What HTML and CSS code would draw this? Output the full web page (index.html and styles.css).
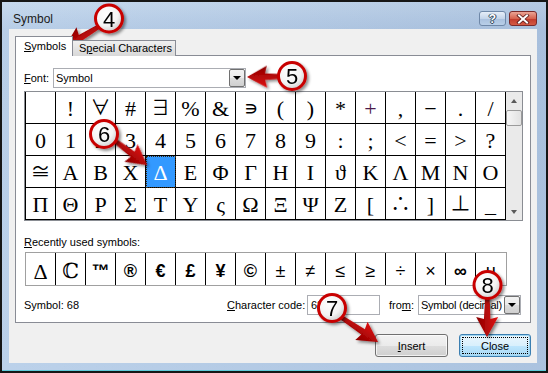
FILE: index.html
```html
<!DOCTYPE html>
<html>
<head>
<meta charset="utf-8">
<link rel="stylesheet" href="styles.css">
</head>
<body>
<div class="window">
  <div class="titlebar">
    <span class="title">Symbol</span>
    <div class="caption">
      <span class="cbtn help">?</span>
      <span class="cbtn close"><svg width="14" height="10" viewBox="0 0 14 10"><path d="M3 1.5 L11 8.5 M11 1.5 L3 8.5" stroke="#5a1a1a" stroke-width="3.6" stroke-linecap="square"/><path d="M3 1.5 L11 8.5 M11 1.5 L3 8.5" stroke="#fff" stroke-width="2" stroke-linecap="square"/></svg></span>
    </div>
  </div>
  <div class="client">
    <div class="tabs">
      <div class="tab active"><u>S</u>ymbols</div>
      <div class="tab">S<u>p</u>ecial Characters</div>
    </div>
    <div class="panel">
      <div class="font-row">
        <span class="font-label"><u>F</u>ont:</span>
        <div class="combo"><span class="combo-text">Symbol</span><span class="dd"><i class="tri"></i></span></div>
      </div>
      <div class="grid-wrap">
        <div class="grid">
          <span class="c"> </span><span class="c">!</span><span class="c m">∀</span><span class="c">#</span><span class="c m">∃</span><span class="c">%</span><span class="c">&amp;</span><span class="c m">∍</span><span class="c">(</span><span class="c">)</span><span class="c">*</span><span class="c plus">+</span><span class="c">,</span><span class="c">−</span><span class="c">.</span><span class="c">/</span>
          <span class="c">0</span><span class="c">1</span><span class="c">2</span><span class="c">3</span><span class="c">4</span><span class="c">5</span><span class="c">6</span><span class="c">7</span><span class="c">8</span><span class="c">9</span><span class="c">:</span><span class="c">;</span><span class="c">&lt;</span><span class="c">=</span><span class="c">&gt;</span><span class="c">?</span>
          <span class="c m">≅</span><span class="c">Α</span><span class="c">Β</span><span class="c">Χ</span><span class="c sel">Δ</span><span class="c">Ε</span><span class="c">Φ</span><span class="c">Γ</span><span class="c">Η</span><span class="c">Ι</span><span class="c">ϑ</span><span class="c">Κ</span><span class="c">Λ</span><span class="c">Μ</span><span class="c">Ν</span><span class="c">Ο</span>
          <span class="c">Π</span><span class="c">Θ</span><span class="c">Ρ</span><span class="c">Σ</span><span class="c">Τ</span><span class="c">Υ</span><span class="c">ς</span><span class="c">Ω</span><span class="c">Ξ</span><span class="c">Ψ</span><span class="c">Ζ</span><span class="c">[</span><span class="c m">∴</span><span class="c">]</span><span class="c m">⊥</span><span class="c">_</span>
        </div>
        <div class="scrollbar">
          <span class="sb-btn"><i class="tri-up"></i></span>
          <span class="thumb"></span>
          <span class="track"></span>
          <span class="sb-btn"><i class="tri-down"></i></span>
        </div>
      </div>
      <div class="recent-label"><u>R</u>ecently used symbols:</div>
      <div class="recent">
        <span class="r serif">Δ</span><span class="r dbl">ℂ</span><span class="r small">™</span><span class="r small">®</span><span class="r bold">€</span><span class="r bold">£</span><span class="r bold">¥</span><span class="r bold">©</span><span class="r">±</span><span class="r">≠</span><span class="r">≤</span><span class="r">≥</span><span class="r">÷</span><span class="r">×</span><span class="r bold">∞</span><span class="r">µ</span>
      </div>
      <div class="info-row">
        <span class="sym-info">Symbol: 68</span>
        <span class="code-label"><u>C</u>haracter code:</span>
        <span class="input">68</span>
        <span class="from-label">fro<u>m</u>:</span>
        <div class="select"><span class="combo-text">Symbol (decimal)</span><span class="dd"><i class="tri"></i></span></div>
      </div>
    </div>
    <div class="buttons">
      <span class="btn"><u>I</u>nsert</span>
      <span class="btn default"><span class="focus">Close</span></span>
    </div>
  </div>
</div>

<svg class="annotations" width="548" height="373" viewBox="0 0 548 373">
  <defs>
    <filter id="sh" x="-50%" y="-50%" width="200%" height="200%">
      <feDropShadow dx="2" dy="2" stdDeviation="1.6" flood-color="#000" flood-opacity="0.45"/>
    </filter>
    <linearGradient id="ag" x1="0" y1="0" x2="0" y2="1">
      <stop offset="0" stop-color="#e01010"/>
      <stop offset="1" stop-color="#8a0000"/>
    </linearGradient>
    <radialGradient id="cg" cx="0.4" cy="0.35" r="0.7">
      <stop offset="0" stop-color="#ffffff"/>
      <stop offset="0.6" stop-color="#f4f4f4"/>
      <stop offset="1" stop-color="#c8c8c8"/>
    </radialGradient>
  </defs>
  <g fill="url(#ag)" filter="url(#sh)">
    <polygon transform="translate(65,47) rotate(149)" points="0,0 -20,-11 -18,-3.2 -44,-2 -44,2 -18,3.2 -20,11"/>
    <polygon transform="translate(247,77) rotate(179)" points="0,0 -20,-11 -18,-3.2 -40,-2 -40,2 -18,3.2 -20,11"/>
    <polygon transform="translate(147,165) rotate(37)" points="0,0 -20,-11 -18,-3.2 -46,-2 -46,2 -18,3.2 -20,11"/>
    <polygon transform="translate(378,342) rotate(34)" points="0,0 -20,-11 -18,-3.2 -50,-2 -50,2 -18,3.2 -20,11"/>
    <polygon transform="translate(487,337) rotate(90.5)" points="0,0 -20,-11 -18,-3.2 -45,-2 -45,2 -18,3.2 -20,11"/>
  </g>
  <g filter="url(#sh)">
    <circle cx="109" cy="18.5" r="13.5" fill="url(#cg)" stroke="#c80000" stroke-width="3"/>
    <circle cx="292" cy="76" r="13.5" fill="url(#cg)" stroke="#c80000" stroke-width="3"/>
    <circle cx="104" cy="134" r="13.5" fill="url(#cg)" stroke="#c80000" stroke-width="3"/>
    <circle cx="332" cy="308" r="13.5" fill="url(#cg)" stroke="#c80000" stroke-width="3"/>
    <circle cx="487.5" cy="285" r="13.5" fill="url(#cg)" stroke="#c80000" stroke-width="3"/>
  </g>
  <g class="num" text-anchor="middle">
    <text x="109" y="26.5">4</text>
    <text x="292" y="84">5</text>
    <text x="104" y="142">6</text>
    <text x="332" y="316">7</text>
    <text x="487.5" y="293">8</text>
  </g>
</svg>
</body>
</html>
```

FILE: styles.css
```css
* { box-sizing: border-box; }
html, body { margin: 0; padding: 0; }
body {
  width: 548px;
  height: 373px;
  overflow: hidden;
  position: relative;
  font-family: "Liberation Sans", Arial, sans-serif;
  font-size: 11px;
  color: #000;
  background: #fff;
}
u { text-decoration: underline; text-underline-offset: 1px; }

.window {
  width: 548px;
  height: 373px;
  border: 2px solid #161616;
  padding: 0 9px 8px 7px;
  background: linear-gradient(90deg, rgba(255,255,255,0.05), rgba(0,30,90,0.07)),
              linear-gradient(180deg, #c3d7ed 0, #b4cbe6 27px, #b8cfe9 100%);
  box-shadow: inset 0 -1px 0 #5fcad9;
  display: flex;
  flex-direction: column;
}

.titlebar {
  height: 27px;
  padding: 6px 0 0 4px;
  display: flex;
  align-items: center;
  justify-content: space-between;
}
.title { font-size: 12px; color: #1a1a1a; }
.caption { display: flex; gap: 3px; }
.cbtn {
  height: 15px;
  border-radius: 3px;
  display: flex;
  align-items: center;
  justify-content: center;
}
.help {
  width: 27px;
  border: 1px solid #6f88a8;
  background: linear-gradient(180deg, #e6eef8 0, #c4d5ea 50%, #a9c0de 51%, #b9cfe8 100%);
  color: #fff;
  font-weight: bold;
  font-size: 12px;
  text-shadow: 0 0 1px #34495e, 0 0 1px #34495e, 1px 0 0 #34495e, -1px 0 0 #34495e, 0 1px 0 #34495e;
}
.close {
  width: 28px;
  border: 1px solid #7a2a2a;
  background: linear-gradient(180deg, #eba596 0, #d7634f 50%, #c0392b 51%, #d45a44 100%);
}

.client {
  flex: 1;
  background: #f0f0f0;
  padding: 7px 6px 6px 6px;
  display: flex;
  flex-direction: column;
}

.tabs {
  display: flex;
  align-items: flex-end;
  height: 20px;
  margin-bottom: -1px;
  position: relative;
  z-index: 1;
}
.tab {
  height: 16px;
  line-height: 14px;
  padding-left: 6px;
  width: 103px;
  border: 1px solid #898c95;
  border-bottom: none;
  border-left: none;
  background: linear-gradient(180deg, #f0f0f0, #d8d8d8);
  white-space: nowrap;
}
.tab.active {
  height: 20px;
  line-height: 18px;
  width: 58px;
  padding-left: 8px;
  border-left: 1px solid #898c95;
  border-right: 1px solid #898c95;
  background: #fff;
}

.panel {
  height: 268px;
  border: 1px solid #898c95;
  background: #fff;
  padding: 12px 9px 7px 8px;
  display: flex;
  flex-direction: column;
}

.font-row { display: flex; align-items: center; height: 20px; }
.font-label { width: 29px; }
.combo, .select {
  height: 20px;
  border: 1px solid #abadb3;
  background: #fff;
  display: flex;
  align-items: center;
  justify-content: space-between;
  padding-left: 2px;
  white-space: nowrap;
  overflow: hidden;
}
.combo-text { overflow: hidden; white-space: nowrap; }
.select .combo-text { letter-spacing: -0.25px; }
.combo { width: 193px; }
.dd {
  flex: none;
  width: 16px;
  height: 18px;
  border: 1px solid #707070;
  border-radius: 2px;
  background: linear-gradient(180deg, #f2f2f2 0, #ebebeb 50%, #dddddd 51%, #cfcfcf 100%);
  display: flex;
  align-items: center;
  justify-content: center;
}
.tri {
  width: 0; height: 0;
  border-left: 4px solid transparent;
  border-right: 4px solid transparent;
  border-top: 4px solid #000;
}

.grid-wrap {
  margin-top: 3px;
  display: flex;
  width: 499px;
  border: 1px solid #8a8d93;
}
.grid {
  display: grid;
  grid-template-columns: repeat(16, 30px);
  border-left: 1px solid #000;
}
.c {
  height: 32px;
  border-right: 1px solid #000;
  border-bottom: 1px solid #000;
  text-align: center;
  font-family: "Liberation Serif", "Times New Roman", serif;
  font-size: 22px;
  line-height: 28px;
  padding-top: 3px;
  overflow: hidden;
  white-space: pre;
}
.c.m {
  font-family: "Noto Sans CJK JP", "DejaVu Serif", serif;
  font-weight: 400;
  font-size: 20px;
  line-height: 30px;
  padding-top: 0;
}
.c.plus { color: #4b1a4a; }
.c.sel {
  background: #3399ff;
  color: #fff;
  outline: 1px dotted #3a2a10;
  outline-offset: -1px;
}

.scrollbar {
  width: 16px;
  display: flex;
  flex-direction: column;
  background: #eaeaea;
}
.sb-btn {
  height: 17px;
  display: flex;
  align-items: center;
  justify-content: center;
}
.tri-up, .tri-down {
  width: 0; height: 0;
  border-left: 3.5px solid transparent;
  border-right: 3.5px solid transparent;
}
.tri-up { border-bottom: 4px solid #5a5a5a; }
.tri-down { border-top: 4px solid #5a5a5a; }
.thumb {
  height: 16px;
  margin: 1px 0 0;
  border: 1px solid #9b9b9b;
  border-radius: 2px;
  background: linear-gradient(90deg, #f6f6f6, #e2e2e2);
}
.track { flex: 1; }

.recent-label { margin-top: 13px; height: 16px; line-height: 16px; }
.recent {
  margin-top: 2px;
  margin-left: 1px;
  width: 482px;
  height: 34px;
  border: 1px solid #a0a0a0;
  display: flex;
}
.r {
  width: 30px;
  height: 32px;
  border-right: 1px solid #000;
  text-align: center;
  font-size: 18px;
  line-height: 32px;
  padding-top: 2px;
}
.r:last-child { border-right: none; }
.r.serif { font-family: "Liberation Serif", serif; font-size: 22px; line-height: 30px; padding-top: 4px; }
.r.dbl { font-family: "DejaVu Serif", serif; font-size: 21px; line-height: 30px; padding-top: 3px; }
.r.bold { font-weight: bold; }
.r.small { font-weight: bold; }

.info-row {
  margin-top: 9px;
  height: 20px;
  display: flex;
  align-items: center;
}
.sym-info { flex: 1; }
.code-label { width: 80px; }
.input {
  width: 73px;
  height: 20px;
  border: 1px solid #abadb3;
  line-height: 18px;
  padding-left: 3px;
}
.from-label { margin-left: 9px; width: 29px; }
.select { width: 103px; }

.buttons {
  margin-top: 11px;
  display: flex;
  justify-content: flex-end;
  gap: 11px;
}
.btn {
  width: 73px;
  height: 23px;
  border: 1px solid #707070;
  border-radius: 3px;
  background: linear-gradient(180deg, #f2f2f2 0, #ebebeb 50%, #dddddd 51%, #cfcfcf 100%);
  display: flex;
  align-items: center;
  justify-content: center;
  box-shadow: inset 0 0 0 1px rgba(255,255,255,0.7);
}
.btn.default {
  width: 72px;
  border-color: #3c7fb1;
  background: linear-gradient(180deg, #eaf6fd 0, #d9f0fc 50%, #bee6fd 51%, #a7d9f5 100%);
  box-shadow: inset 0 0 0 1px #9fd6f2;
  padding: 2px;
}
.focus {
  width: 100%;
  height: 100%;
  border: 1px dotted #000;
  display: flex;
  align-items: center;
  justify-content: center;
}

.annotations {
  position: absolute;
  left: 0;
  top: 0;
  pointer-events: none;
}
.num text {
  font-family: "Liberation Sans", Arial, sans-serif;
  font-size: 22px;
  fill: #000;
}
```
